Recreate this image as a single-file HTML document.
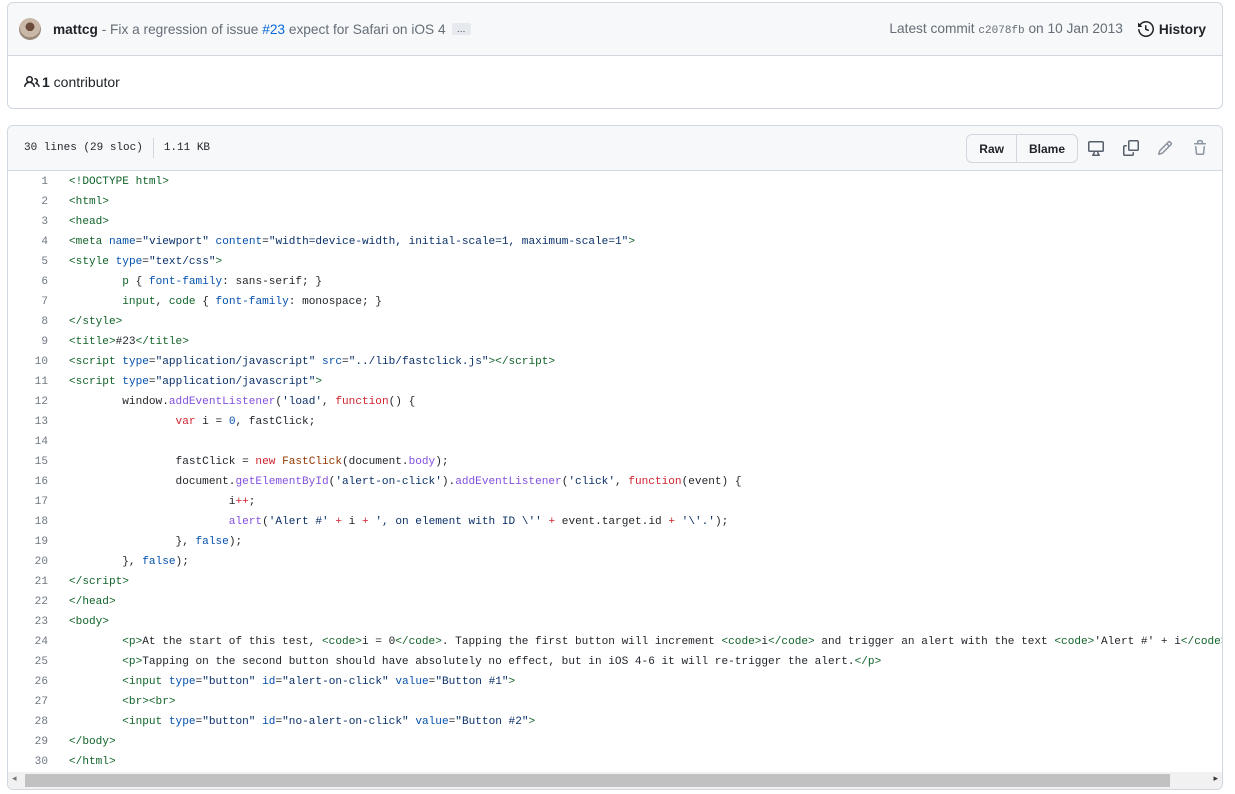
<!DOCTYPE html>
<html><head><meta charset="utf-8">
<style>
*{box-sizing:border-box;margin:0;padding:0}
body{width:1235px;height:794px;overflow:hidden;background:#fff;font-family:"Liberation Sans",sans-serif;color:#1f2328;position:relative}
.box1{position:absolute;left:7px;top:2px;width:1216px;height:107px;border:1px solid #d0d7de;border-radius:6px;overflow:hidden}
.h1{height:53px;background:#f6f8fa;border-bottom:1px solid #d0d7de;display:flex;align-items:center;padding:0 16px 0 11px;font-size:13.7px}
.av{width:22px;height:22px;border-radius:50%;background:radial-gradient(circle at 50% 40%,#6b4a3a 0 25%,#c9b8a8 26% 60%,#9a8878 61%);margin-right:12px}
.muted{color:#656d76}
.dots{display:inline-block;background:#e6eaef;border-radius:2px;font-size:9px;line-height:12px;padding:0 5px;margin-left:6px;vertical-align:middle;color:#333}
.contrib{padding:0 16px;height:52px;display:flex;align-items:center;font-size:14px}
.box2{position:absolute;left:7px;top:125px;width:1216px;height:665px;border:1px solid #d0d7de;border-radius:6px;overflow:hidden}
.h2{height:45px;background:#f6f8fa;border-bottom:1px solid #d0d7de;display:flex;align-items:center;padding:0 16px;font-family:"Liberation Mono",monospace;font-size:11px;color:#1f2328}
.sep{width:1px;height:20px;background:#d0d7de;margin:0 10px}
.btns{position:absolute;right:144px;top:8px;display:flex;border:1px solid #d0d7de;border-radius:6px;background:#f6f8fa;height:29px;font-family:"Liberation Sans",sans-serif;font-size:12px;font-weight:bold}
.btns span{display:flex;align-items:center;padding:0 12px}
.btns span+span{border-left:1px solid #d0d7de}
.code{position:absolute;top:45px;left:0;right:0;padding-top:1px;font-family:"Liberation Mono",monospace;font-size:11.1px;tab-size:8;-moz-tab-size:8}
.l{height:20px;line-height:20px;display:flex;white-space:pre}
.n{width:40px;text-align:right;color:#6e7781;flex:none}
.c{padding-left:21px;color:#1f2328}
.t{color:#116329}.a{color:#0550ae}.s{color:#0a3069}.k{color:#cf222e}.f{color:#8250df}.o{color:#953800}
.sb{position:absolute;left:0;right:0;bottom:0;height:17px;background:#f1f1f1}
.thumb{position:absolute;left:17px;width:1145px;top:2px;height:13px;background:#c1c1c1}
</style></head><body>
<div class="box1">
 <div class="h1"><div class="av"></div><b>mattcg</b>&nbsp;<span class="muted">- Fix a regression of issue <span style="color:#0969da">#23</span> expect for Safari on iOS 4</span><span class="dots">…</span>
  <span style="margin-left:auto" class="muted">Latest commit <span style="font-family:'Liberation Mono',monospace;font-size:11px">c2078fb</span> on 10 Jan 2013</span>
  <svg style="margin-left:15px" width="16" height="16" viewBox="0 0 16 16" fill="#1f2328"><path d="M1.643 3.143.427 1.927A.25.25 0 0 0 0 2.104V5.750c0 .138.112.25.25.25h3.646a.25.25 0 0 0 .177-.427L2.715 4.215a6.5 6.5 0 1 1-1.180 4.458.75.75 0 1 0-1.493.154 8.001 8.001 0 1 0 1.600-5.684ZM7.750 4a.75.75 0 0 1 .75.75v2.992l2.028.812a.75.75 0 0 1-.557 1.392l-2.5-1A.751.751 0 0 1 7 8.250v-3.5A.75.75 0 0 1 7.750 4Z"/></svg>
  <b style="margin-left:5px">History</b></div>
 <div class="contrib"><svg width="16" height="16" viewBox="0 0 16 16" fill="#1f2328"><path d="M2 5.5a3.5 3.5 0 1 1 5.898 2.549 5.508 5.508 0 0 1 3.034 4.084.75.75 0 1 1-1.482.235 4 4 0 0 0-7.9 0 .75.75 0 0 1-1.482-.236A5.507 5.507 0 0 1 3.102 8.050 3.493 3.493 0 0 1 2 5.5ZM11 4a3.001 3.001 0 0 1 2.220 5.018 5.010 5.010 0 0 1 2.560 3.012.749.749 0 0 1-.885.954.752.752 0 0 1-.549-.514 3.507 3.507 0 0 0-2.522-2.372.75.75 0 0 1-.574-.73v-.352a.75.75 0 0 1 .416-.672A1.5 1.5 0 0 0 11 5.5.75.75 0 0 1 11 4Zm-5.5-.5a2 2 0 1 0-.001 3.999A2 2 0 0 0 5.5 3.5Z"/></svg><b style="margin-left:2px">1</b>&nbsp;contributor</div>
</div>
<div class="box2">
 <div class="h2">30 lines (29 sloc)<div class="sep"></div>1.11 KB
  <div class="btns"><span>Raw</span><span>Blame</span></div>
  <svg style="position:absolute;right:118px;top:14px" width="16" height="16" viewBox="0 0 16 16" fill="#57606a"><path d="M14.250 1c.966 0 1.750.784 1.750 1.750v7.5A1.750 1.750 0 0 1 14.250 12h-3.727c.099 1.041.52 1.872 1.292 2.757A.752.752 0 0 1 11.250 16h-6.5a.75.75 0 0 1-.565-1.243c.772-.885 1.192-1.716 1.292-2.757H1.750A1.750 1.750 0 0 1 0 10.250v-7.5C0 1.784.784 1 1.750 1ZM1.750 2.5a.25.25 0 0 0-.25.25v7.5c0 .138.112.25.25.25h12.5a.25.25 0 0 0 .25-.25v-7.5a.25.25 0 0 0-.25-.25ZM9.018 12H6.982a5.720 5.720 0 0 1-.765 2.5h3.566a5.720 5.720 0 0 1-.765-2.5Z"/></svg>
  <svg style="position:absolute;right:83px;top:14px" width="16" height="16" viewBox="0 0 16 16" fill="#57606a"><path d="M0 6.750C0 5.784.784 5 1.750 5h1.5a.75.75 0 0 1 0 1.5h-1.5a.25.25 0 0 0-.25.25v7.5c0 .138.112.25.25.25h7.5a.25.25 0 0 0 .25-.25v-1.5a.75.75 0 0 1 1.5 0v1.5A1.750 1.750 0 0 1 9.250 16h-7.5A1.750 1.750 0 0 1 0 14.250Z"/><path d="M5 1.750C5 .784 5.784 0 6.750 0h7.5C15.216 0 16 .784 16 1.750v7.5A1.750 1.750 0 0 1 14.250 11h-7.5A1.750 1.750 0 0 1 5 9.250Zm1.750-.25a.25.25 0 0 0-.25.25v7.5c0 .138.112.25.25.25h7.5a.25.25 0 0 0 .25-.25v-7.5a.25.25 0 0 0-.25-.25Z"/></svg>
  <svg style="position:absolute;right:49px;top:14px" width="16" height="16" viewBox="0 0 16 16" fill="#8c959f"><path d="M11.013 1.427a1.750 1.750 0 0 1 2.474 0l1.086 1.086a1.750 1.750 0 0 1 0 2.474l-8.610 8.610c-.21.21-.47.364-.756.445l-3.251.93a.75.75 0 0 1-.927-.928l.929-3.250c.081-.286.235-.547.445-.758l8.610-8.610Zm.176 4.823L9.750 4.810l-6.286 6.287a.253.253 0 0 0-.064.108l-.558 1.953 1.953-.558a.253.253 0 0 0 .108-.064Zm1.238-3.763a.25.25 0 0 0-.354 0L10.811 3.750l1.439 1.440 1.263-1.263a.25.25 0 0 0 0-.354Z"/></svg>
  <svg style="position:absolute;right:14px;top:14px" width="16" height="16" viewBox="0 0 16 16" fill="#8c959f"><path d="M11 1.750V3h2.250a.75.75 0 0 1 0 1.5H2.750a.75.75 0 0 1 0-1.5H5V1.750C5 .784 5.784 0 6.750 0h2.5C10.216 0 11 .784 11 1.750ZM4.496 6.675l.66 6.6a.25.25 0 0 0 .249.225h5.190a.25.25 0 0 0 .249-.225l.66-6.6a.75.75 0 0 1 1.492.149l-.66 6.6A1.748 1.748 0 0 1 10.595 15h-5.190a1.750 1.750 0 0 1-1.741-1.575l-.66-6.6a.75.75 0 1 1 1.492-.15ZM6.5 1.750V3h3V1.750a.25.25 0 0 0-.25-.25h-2.5a.25.25 0 0 0-.25.25Z"/></svg>
 </div>
 <div class="code">
<div class="l"><span class="n">1</span><span class="c"><span class="t">&lt;!DOCTYPE html&gt;</span></span></div>
<div class="l"><span class="n">2</span><span class="c"><span class="t">&lt;html&gt;</span></span></div>
<div class="l"><span class="n">3</span><span class="c"><span class="t">&lt;head&gt;</span></span></div>
<div class="l"><span class="n">4</span><span class="c"><span class="t">&lt;meta</span> <span class="a">name</span>=<span class="s">"viewport"</span> <span class="a">content</span>=<span class="s">"width=device-width, initial-scale=1, maximum-scale=1"</span><span class="t">&gt;</span></span></div>
<div class="l"><span class="n">5</span><span class="c"><span class="t">&lt;style</span> <span class="a">type</span>=<span class="s">"text/css"</span><span class="t">&gt;</span></span></div>
<div class="l"><span class="n">6</span><span class="c">	<span class="t">p</span> { <span class="a">font-family</span>: sans-serif; }</span></div>
<div class="l"><span class="n">7</span><span class="c">	<span class="t">input</span>, <span class="t">code</span> { <span class="a">font-family</span>: monospace; }</span></div>
<div class="l"><span class="n">8</span><span class="c"><span class="t">&lt;/style&gt;</span></span></div>
<div class="l"><span class="n">9</span><span class="c"><span class="t">&lt;title&gt;</span>#23<span class="t">&lt;/title&gt;</span></span></div>
<div class="l"><span class="n">10</span><span class="c"><span class="t">&lt;script</span> <span class="a">type</span>=<span class="s">"application/javascript"</span> <span class="a">src</span>=<span class="s">"../lib/fastclick.js"</span><span class="t">&gt;&lt;/script&gt;</span></span></div>
<div class="l"><span class="n">11</span><span class="c"><span class="t">&lt;script</span> <span class="a">type</span>=<span class="s">"application/javascript"</span><span class="t">&gt;</span></span></div>
<div class="l"><span class="n">12</span><span class="c">	window.<span class="f">addEventListener</span>(<span class="s">'load'</span>, <span class="k">function</span>() {</span></div>
<div class="l"><span class="n">13</span><span class="c">		<span class="k">var</span> i = <span class="a">0</span>, fastClick;</span></div>
<div class="l"><span class="n">14</span><span class="c"></span></div>
<div class="l"><span class="n">15</span><span class="c">		fastClick = <span class="k">new</span> <span class="o">FastClick</span>(document.<span class="f">body</span>);</span></div>
<div class="l"><span class="n">16</span><span class="c">		document.<span class="f">getElementById</span>(<span class="s">'alert-on-click'</span>).<span class="f">addEventListener</span>(<span class="s">'click'</span>, <span class="k">function</span>(event) {</span></div>
<div class="l"><span class="n">17</span><span class="c">			i<span class="k">++</span>;</span></div>
<div class="l"><span class="n">18</span><span class="c">			<span class="f">alert</span>(<span class="s">'Alert #'</span> <span class="k">+</span> i <span class="k">+</span> <span class="s">', on element with ID \''</span> <span class="k">+</span> event.target.id <span class="k">+</span> <span class="s">'\'.'</span>);</span></div>
<div class="l"><span class="n">19</span><span class="c">		}, <span class="a">false</span>);</span></div>
<div class="l"><span class="n">20</span><span class="c">	}, <span class="a">false</span>);</span></div>
<div class="l"><span class="n">21</span><span class="c"><span class="t">&lt;/script&gt;</span></span></div>
<div class="l"><span class="n">22</span><span class="c"><span class="t">&lt;/head&gt;</span></span></div>
<div class="l"><span class="n">23</span><span class="c"><span class="t">&lt;body&gt;</span></span></div>
<div class="l"><span class="n">24</span><span class="c">	<span class="t">&lt;p&gt;</span>At the start of this test, <span class="t">&lt;code&gt;</span>i = 0<span class="t">&lt;/code&gt;</span>. Tapping the first button will increment <span class="t">&lt;code&gt;</span>i<span class="t">&lt;/code&gt;</span> and trigger an alert with the text <span class="t">&lt;code&gt;</span>'Alert #' + i<span class="t">&lt;/code&gt;</span>.<span class="t">&lt;/p&gt;</span></span></div>
<div class="l"><span class="n">25</span><span class="c">	<span class="t">&lt;p&gt;</span>Tapping on the second button should have absolutely no effect, but in iOS 4-6 it will re-trigger the alert.<span class="t">&lt;/p&gt;</span></span></div>
<div class="l"><span class="n">26</span><span class="c">	<span class="t">&lt;input</span> <span class="a">type</span>=<span class="s">"button"</span> <span class="a">id</span>=<span class="s">"alert-on-click"</span> <span class="a">value</span>=<span class="s">"Button #1"</span><span class="t">&gt;</span></span></div>
<div class="l"><span class="n">27</span><span class="c">	<span class="t">&lt;br&gt;&lt;br&gt;</span></span></div>
<div class="l"><span class="n">28</span><span class="c">	<span class="t">&lt;input</span> <span class="a">type</span>=<span class="s">"button"</span> <span class="a">id</span>=<span class="s">"no-alert-on-click"</span> <span class="a">value</span>=<span class="s">"Button #2"</span><span class="t">&gt;</span></span></div>
<div class="l"><span class="n">29</span><span class="c"><span class="t">&lt;/body&gt;</span></span></div>
<div class="l"><span class="n">30</span><span class="c"><span class="t">&lt;/html&gt;</span></span></div>
 </div>
 <div class="sb"><span style="position:absolute;left:4px;top:1px;font-size:9px;color:#777">◂</span><div class="thumb"></div><span style="position:absolute;right:4px;top:1px;font-size:9px;color:#333">▸</span></div>
</div>
</body></html>
